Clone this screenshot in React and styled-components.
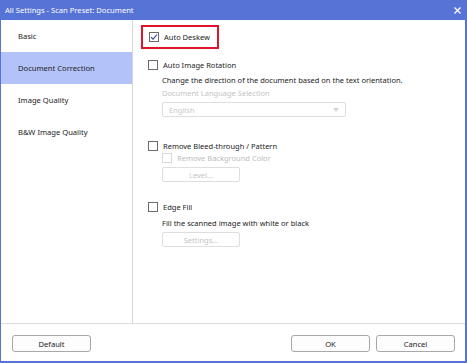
import React from 'react';
import styled, {createGlobalStyle} from 'styled-components';

const Global = createGlobalStyle`
  html, body { margin: 0; padding: 0; background: #fff; }
  body { font-family: "Noto Sans", "Open Sans", sans-serif; }
`;

const Window = styled.div`
  width: 467px;
  height: 363px;
  box-sizing: border-box;
  border: 1px solid #5673d6;
  border-right-width: 2px;
  border-bottom-width: 2px;
  border-top: none;
  display: flex;
  flex-direction: column;
  background: #fff;
`;

const TitleBar = styled.div`
  height: 20px;
  background: #5673d6;
  color: #fff;
  font-size: 7.6px;
  display: flex;
  align-items: center;
  justify-content: space-between;
  padding: 0 6px 0 5px;
  margin: 0 -2px 0 -1px;
`;

const Body = styled.div`
  flex: 1;
  display: flex;
  border-bottom: 1px solid #dcdcdc;
`;

const Sidebar = styled.div`
  width: 131px;
  border-right: 1px solid #d6d6d6;
  display: flex;
  flex-direction: column;
`;

const NavItem = styled.div`
  height: 32px;
  display: flex;
  align-items: center;
  padding-left: 17px;
  font-size: 7.6px;
  color: #222;
  background: ${p => (p.active ? '#b3c3fa' : 'transparent')};
`;

const Content = styled.div`
  flex: 1;
  padding: 5px 0 0 8px;
  display: flex;
  flex-direction: column;
  font-size: 7.5px;
  color: #222;
`;

const Highlight = styled.div`
  align-self: flex-start;
  border: 2px solid #e0142a;
  padding: 4px 7px 4px 6px;
`;

const CheckRow = styled.label`
  display: flex;
  align-items: center;
  gap: 5px;
  height: 12px;
  color: ${p => (p.disabled ? '#bdbdbd' : '#222')};
  margin-left: ${p => p.indent || 0}px;
`;

const Box = styled.span`
  width: 10px;
  height: 10px;
  box-sizing: border-box;
  border: 1px solid ${p => (p.disabled ? '#d8d8d8' : '#6b6b6b')};
  background: #fff;
  display: inline-flex;
  align-items: center;
  justify-content: center;
`;

const Group = styled.div`
  display: flex;
  flex-direction: column;
  margin-left: 7px;
`;

const Section = styled.div`
  display: flex;
  flex-direction: column;
  margin-top: ${p => p.top}px;
`;

const Desc = styled.div`
  line-height: 12px;
  margin-left: 14px;
  margin-top: ${p => p.top || 0}px;
  color: ${p => (p.muted ? '#c4c4c4' : '#222')};
`;

const Select = styled.div`
  width: 184px;
  height: 15px;
  box-sizing: border-box;
  border: 1px solid #dedede;
  border-radius: 2px;
  margin: 3px 0 0 14px;
  display: flex;
  align-items: center;
  justify-content: space-between;
  padding: 0 6px;
  color: #c8c8c8;
`;

const SmallButton = styled.div`
  width: 78px;
  height: 15px;
  box-sizing: border-box;
  border: 1px solid #dedede;
  border-radius: 2px;
  margin: ${p => p.top || 2}px 0 0 14px;
  display: flex;
  align-items: center;
  justify-content: center;
  color: #c4c4c4;
`;

const Footer = styled.div`
  height: 37px;
  display: flex;
  align-items: center;
  padding: 2px 10px 0 11px;
  box-sizing: border-box;
  gap: 6px;
`;

const Button = styled.button`
  width: 79px;
  height: 17px;
  box-sizing: border-box;
  border: 1px solid #a8a8a8;
  border-radius: 3px;
  background: #fdfdfd;
  font-family: inherit;
  font-size: 7.6px;
  color: #222;
  padding: 0;
  margin-left: ${p => (p.push ? 'auto' : '0')};
`;

const Check = () => (
  <svg width="8" height="8" viewBox="0 0 8 8">
    <path d="M1 4.2 L3 6.2 L7 1.5" fill="none" stroke="#2a3fa8" strokeWidth="1.1" />
  </svg>
);

const Checkbox = ({checked, disabled, indent, children}) => (
  <CheckRow disabled={disabled} indent={indent}>
    <Box disabled={disabled}>{checked && <Check />}</Box>
    {children}
  </CheckRow>
);

export default function App() {
  return (
    <>
      <Global />
      <Window>
        <TitleBar>
          <span>All Settings - Scan Preset: Document</span>
          <svg width="7" height="7" viewBox="0 0 7 7">
            <path d="M0.5 0.5 L6.5 6.5 M6.5 0.5 L0.5 6.5" stroke="#fff" strokeWidth="1.3" />
          </svg>
        </TitleBar>
        <Body>
          <Sidebar>
            <NavItem>Basic</NavItem>
            <NavItem active>Document Correction</NavItem>
            <NavItem>Image Quality</NavItem>
            <NavItem>B&amp;W Image Quality</NavItem>
          </Sidebar>
          <Content>
            <Highlight>
              <Checkbox checked>Auto Deskew</Checkbox>
            </Highlight>
            <Group>
              <Section top={10}>
                <Checkbox>Auto Image Rotation</Checkbox>
                <Desc top={3}>Change the direction of the document based on the text orientation.</Desc>
                <Desc muted top={1}>Document Language Selection</Desc>
                <Select>
                  <span>English</span>
                  <svg width="6" height="4" viewBox="0 0 6 4">
                    <path d="M0 0 L6 0 L3 4 Z" fill="#d4d4d4" />
                  </svg>
                </Select>
              </Section>
              <Section top={23}>
                <Checkbox>Remove Bleed-through / Pattern</Checkbox>
                <Checkbox disabled indent={14}>Remove Background Color</Checkbox>
                <SmallButton top={3}>Level...</SmallButton>
              </Section>
              <Section top={19}>
                <Checkbox>Edge Fill</Checkbox>
                <Desc top={4}>Fill the scanned image with white or black</Desc>
                <SmallButton top={3}>Settings...</SmallButton>
              </Section>
            </Group>
          </Content>
        </Body>
        <Footer>
          <Button>Default</Button>
          <Button push>OK</Button>
          <Button>Cancel</Button>
        </Footer>
      </Window>
    </>
  );
}
